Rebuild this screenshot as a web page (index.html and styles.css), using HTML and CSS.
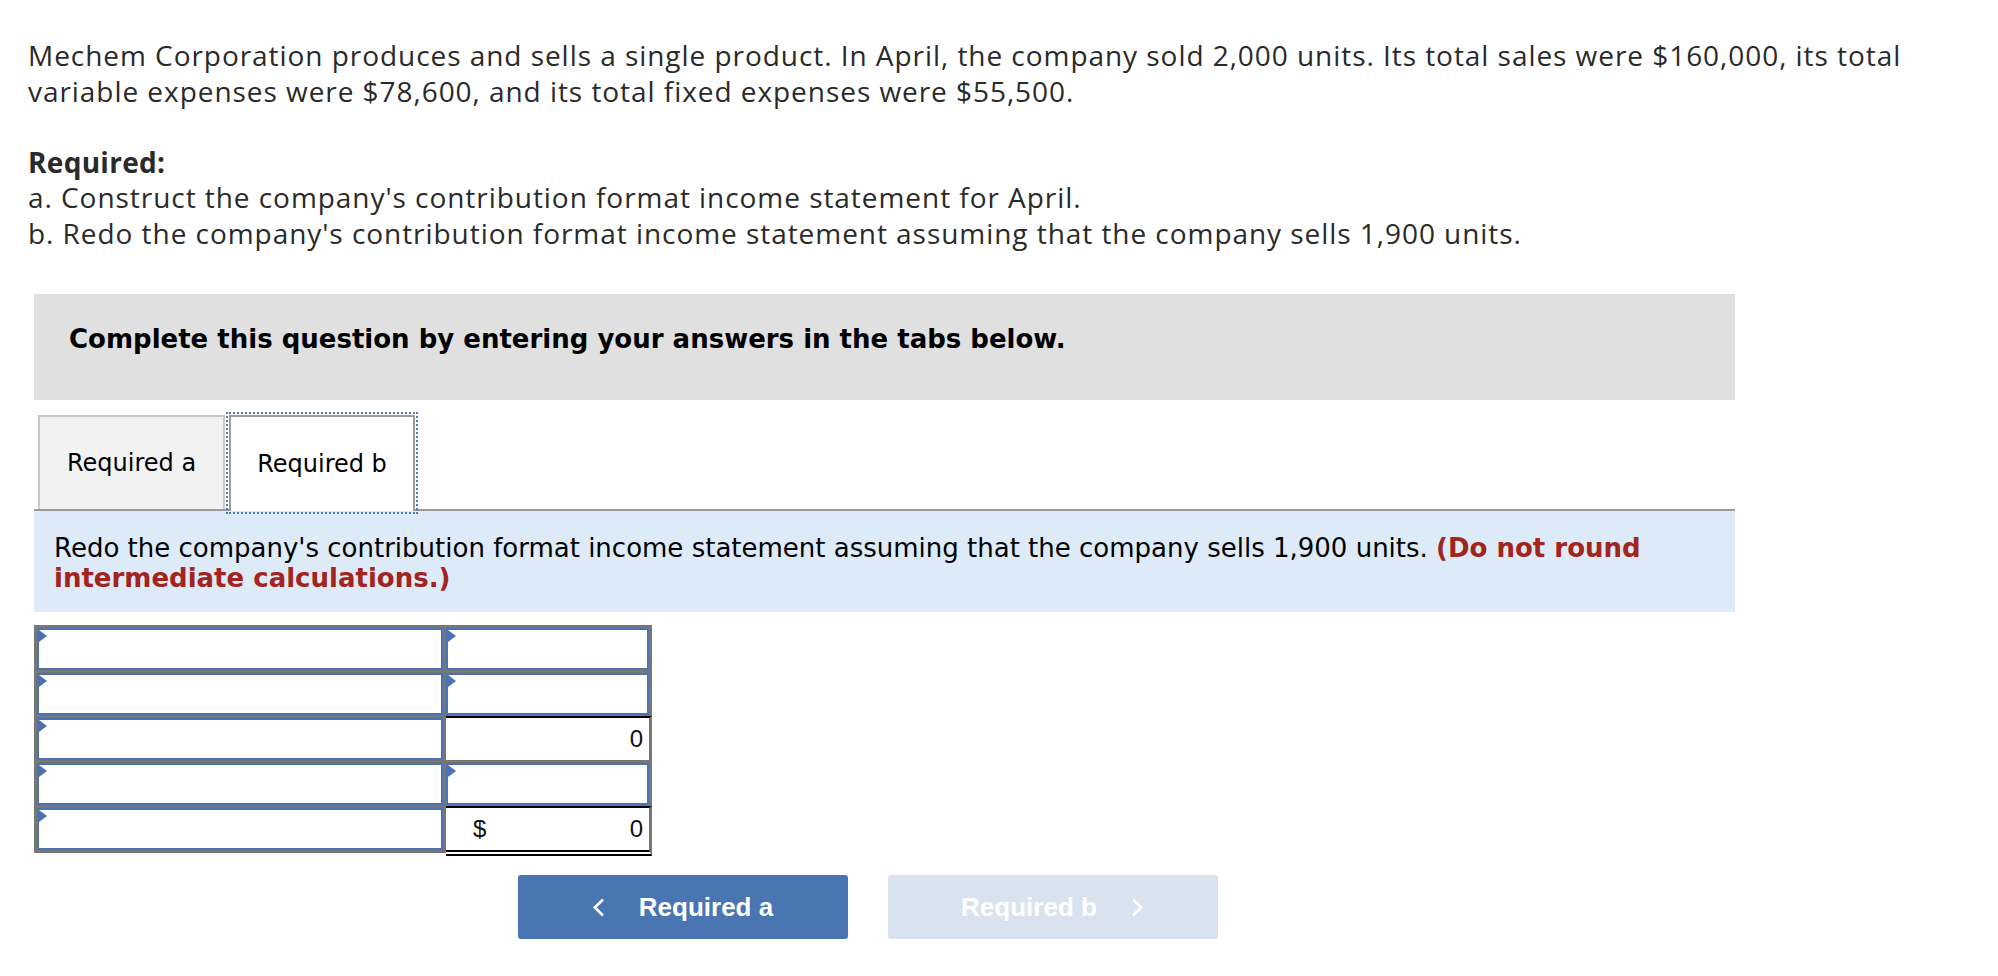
FILE: index.html
```html
<!DOCTYPE html>
<html lang="en">
<head>
<meta charset="utf-8">
<title>Contribution format income statement</title>
<link rel="stylesheet" href="styles.css">
</head>
<body>
<div class="intro">
  <p>Mechem Corporation produces and sells a single product. In April, the company sold 2,000 units. Its total sales were $160,000, its total variable expenses were $78,600, and its total fixed expenses were $55,500.</p>
  <p><strong>Required:</strong><br>a. Construct the company's contribution format income statement for April.<br>b. Redo the company's contribution format income statement assuming that the company sells 1,900 units.</p>
</div>

<div class="question">
  <div class="instructions">Complete this question by entering your answers in the tabs below.</div>

  <div class="tabs">
    <div class="tab">Required a</div>
    <div class="tab active">Required b</div>
  </div>

  <div class="panel">
    <p>Redo the company's contribution format income statement assuming that the company sells 1,900 units. <strong class="note">(Do not round intermediate calculations.)</strong></p>
  </div>

  <div class="sheet">
    <div class="field"></div>
    <div class="field"></div>
    <div class="field"></div>
    <div class="field"></div>
    <div class="field"></div>
    <div class="field"></div>
    <div class="field"></div>
    <div class="calc"><span></span><span>0</span></div>
    <div class="field"></div>
    <div class="calc total"><span>$</span><span>0</span></div>
  </div>

  <div class="nav">
    <button class="btn prev" type="button">
      <svg class="chev" width="13" height="19" viewBox="0 0 13 19"><polyline points="11,1.5 2.8,9.5 11,17.5" fill="none" stroke="#fff" stroke-width="2.6"/></svg>
      <span>Required a</span>
    </button>
    <button class="btn next" type="button">
      <span>Required b</span>
      <svg class="chev" width="13" height="19" viewBox="0 0 13 19"><polyline points="2,1.5 10.2,9.5 2,17.5" fill="none" stroke="#fff" stroke-width="2.6"/></svg>
    </button>
  </div>
</div>
</body>
</html>
```

FILE: styles.css
```css
html, body {
  margin: 0;
  padding: 0;
  background: #ffffff;
}

body {
  padding: 38px 0 40px 28px;
}

.intro {
  width: 1930px;
  font-family: "Open Sans", "Liberation Sans", sans-serif;
  font-size: 28px;
  letter-spacing: 0.95px;
  line-height: 35.5px;
  color: #2a2a2a;
}

.intro p {
  margin: 0 0 35.5px;
}

.intro p:last-child {
  margin-bottom: 0;
}

.intro strong {
  font-weight: 700;
  letter-spacing: 0.3px;
}

.question {
  margin: 43px 0 0 6px;
  width: 1701px;
  font-family: "DejaVu Sans", Verdana, sans-serif;
  color: #000;
}

.instructions {
  background: #e0e0e0;
  padding: 30px 35px 46px;
  font-size: 26px;
  font-weight: 700;
  line-height: 30px;
}

.tabs {
  display: flex;
  gap: 4px;
  margin-top: 15px;
  padding-left: 4px;
  border-bottom: 2px solid #9a9a9a;
}

.tab {
  height: 92px;
  padding: 0 27px;
  display: flex;
  align-items: center;
  font-size: 24px;
  background: #f2f2f2;
  border: 2px solid #c8c8c8;
  border-bottom: none;
}

.tab.active {
  background: #ffffff;
  border-color: #9a9a9a;
  margin-bottom: -2px;
  height: 94px;
  padding: 0 26px;
  outline: 2px dotted #4a7cc6;
  outline-offset: 1px;
}

.panel {
  background: #ddeaf7;
  padding: 22px 20px 19px 20px;
}

.panel p {
  margin: 0;
  font-size: 26px;
  line-height: 30px;
}

.note {
  color: #a3241e;
  font-weight: 700;
}

.sheet {
  margin-top: 13px;
  width: 618px;
  box-sizing: border-box;
  display: grid;
  grid-template-columns: 406px 203px;
  grid-template-rows: repeat(5, 42px);
  grid-auto-flow: column;
  gap: 3px;
  padding: 3px;
  background: #777777;
}

.field {
  position: relative;
  background: #ffffff;
  border: 2px solid #4a72b5;
}

.field::before {
  content: "";
  position: absolute;
  top: 0;
  left: 0;
  border-left: 8px solid #4a72b5;
  border-top: 6px solid transparent;
  border-bottom: 6px solid transparent;
}

.calc {
  margin-top: -2px;
  margin-right: -3px;
  background: #ffffff;
  border-top: 2px solid #000;
  border-right: 3px solid #777777;
  display: flex;
  align-items: center;
  justify-content: space-between;
  padding: 0 6px 0 27px;
  font-family: "Liberation Sans", Arial, sans-serif;
  font-size: 24px;
  color: #111;
}

.calc.total {
  margin-bottom: -6px;
  border-bottom: 6px double #000;
}

.nav {
  display: flex;
  justify-content: center;
  gap: 40px;
  margin-top: 22px;
  padding-right: 34px;
}

.btn {
  width: 330px;
  height: 64px;
  border: none;
  border-radius: 3px;
  display: flex;
  align-items: center;
  justify-content: center;
  gap: 34px;
  font-family: "Liberation Sans", Arial, sans-serif;
  font-size: 26px;
  font-weight: 700;
  color: #ffffff;
  padding: 0;
}

.btn.prev {
  background: #4a75b3;
}

.btn.next {
  background: #d9e3ef;
  cursor: default;
}

.chev {
  display: block;
}
```
